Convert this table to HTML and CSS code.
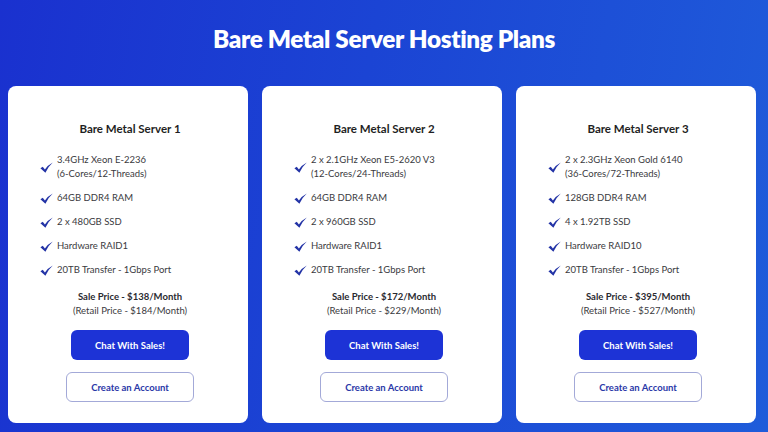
FILE: index.html
```html
<!DOCTYPE html>
<html>
<head>
<meta charset="utf-8">
<link rel="stylesheet" href="styles.css">
</head>
<body>
<div class="page">
  <h1 class="heading">Bare Metal Server Hosting Plans</h1>
  <div class="plans">
    <div class="card">
      <h2 class="card-title">Bare Metal Server 1</h2>
      <ul class="features">
        <li><svg class="check" viewBox="0 0 13 11"><path d="M0.4 6.2 L2.8 4.8 L4.9 7.6 Q7.8 3.2 12.8 0.6 Q8.6 4.2 5.4 10.8 Z"/></svg><span>3.4GHz Xeon E-2236<br>(6-Cores/12-Threads)</span></li>
        <li><svg class="check" viewBox="0 0 13 11"><path d="M0.4 6.2 L2.8 4.8 L4.9 7.6 Q7.8 3.2 12.8 0.6 Q8.6 4.2 5.4 10.8 Z"/></svg><span>64GB DDR4 RAM</span></li>
        <li><svg class="check" viewBox="0 0 13 11"><path d="M0.4 6.2 L2.8 4.8 L4.9 7.6 Q7.8 3.2 12.8 0.6 Q8.6 4.2 5.4 10.8 Z"/></svg><span>2 x 480GB SSD</span></li>
        <li><svg class="check" viewBox="0 0 13 11"><path d="M0.4 6.2 L2.8 4.8 L4.9 7.6 Q7.8 3.2 12.8 0.6 Q8.6 4.2 5.4 10.8 Z"/></svg><span>Hardware RAID1</span></li>
        <li><svg class="check" viewBox="0 0 13 11"><path d="M0.4 6.2 L2.8 4.8 L4.9 7.6 Q7.8 3.2 12.8 0.6 Q8.6 4.2 5.4 10.8 Z"/></svg><span>20TB Transfer - 1Gbps Port</span></li>
      </ul>
      <p class="sale">Sale Price - $138/Month</p>
      <p class="retail">(Retail Price - $184/Month)</p>
      <a class="btn btn-primary">Chat With Sales!</a>
      <a class="btn btn-outline">Create an Account</a>
    </div>
    <div class="card">
      <h2 class="card-title">Bare Metal Server 2</h2>
      <ul class="features">
        <li><svg class="check" viewBox="0 0 13 11"><path d="M0.4 6.2 L2.8 4.8 L4.9 7.6 Q7.8 3.2 12.8 0.6 Q8.6 4.2 5.4 10.8 Z"/></svg><span>2 x 2.1GHz Xeon E5-2620 V3<br>(12-Cores/24-Threads)</span></li>
        <li><svg class="check" viewBox="0 0 13 11"><path d="M0.4 6.2 L2.8 4.8 L4.9 7.6 Q7.8 3.2 12.8 0.6 Q8.6 4.2 5.4 10.8 Z"/></svg><span>64GB DDR4 RAM</span></li>
        <li><svg class="check" viewBox="0 0 13 11"><path d="M0.4 6.2 L2.8 4.8 L4.9 7.6 Q7.8 3.2 12.8 0.6 Q8.6 4.2 5.4 10.8 Z"/></svg><span>2 x 960GB SSD</span></li>
        <li><svg class="check" viewBox="0 0 13 11"><path d="M0.4 6.2 L2.8 4.8 L4.9 7.6 Q7.8 3.2 12.8 0.6 Q8.6 4.2 5.4 10.8 Z"/></svg><span>Hardware RAID1</span></li>
        <li><svg class="check" viewBox="0 0 13 11"><path d="M0.4 6.2 L2.8 4.8 L4.9 7.6 Q7.8 3.2 12.8 0.6 Q8.6 4.2 5.4 10.8 Z"/></svg><span>20TB Transfer - 1Gbps Port</span></li>
      </ul>
      <p class="sale">Sale Price - $172/Month</p>
      <p class="retail">(Retail Price - $229/Month)</p>
      <a class="btn btn-primary">Chat With Sales!</a>
      <a class="btn btn-outline">Create an Account</a>
    </div>
    <div class="card">
      <h2 class="card-title">Bare Metal Server 3</h2>
      <ul class="features">
        <li><svg class="check" viewBox="0 0 13 11"><path d="M0.4 6.2 L2.8 4.8 L4.9 7.6 Q7.8 3.2 12.8 0.6 Q8.6 4.2 5.4 10.8 Z"/></svg><span>2 x 2.3GHz Xeon Gold 6140<br>(36-Cores/72-Threads)</span></li>
        <li><svg class="check" viewBox="0 0 13 11"><path d="M0.4 6.2 L2.8 4.8 L4.9 7.6 Q7.8 3.2 12.8 0.6 Q8.6 4.2 5.4 10.8 Z"/></svg><span>128GB DDR4 RAM</span></li>
        <li><svg class="check" viewBox="0 0 13 11"><path d="M0.4 6.2 L2.8 4.8 L4.9 7.6 Q7.8 3.2 12.8 0.6 Q8.6 4.2 5.4 10.8 Z"/></svg><span>4 x 1.92TB SSD</span></li>
        <li><svg class="check" viewBox="0 0 13 11"><path d="M0.4 6.2 L2.8 4.8 L4.9 7.6 Q7.8 3.2 12.8 0.6 Q8.6 4.2 5.4 10.8 Z"/></svg><span>Hardware RAID10</span></li>
        <li><svg class="check" viewBox="0 0 13 11"><path d="M0.4 6.2 L2.8 4.8 L4.9 7.6 Q7.8 3.2 12.8 0.6 Q8.6 4.2 5.4 10.8 Z"/></svg><span>20TB Transfer - 1Gbps Port</span></li>
      </ul>
      <p class="sale">Sale Price - $395/Month</p>
      <p class="retail">(Retail Price - $527/Month)</p>
      <a class="btn btn-primary">Chat With Sales!</a>
      <a class="btn btn-outline">Create an Account</a>
    </div>
  </div>
</div>
</body>
</html>
```

FILE: styles.css
```css
* { box-sizing: border-box; }
html, body {
  margin: 0;
  padding: 0;
  width: 768px;
  height: 432px;
  overflow: hidden;
}
body {
  font-family: Lato, "Open Sans", sans-serif;
  background: linear-gradient(100deg, #1a31cf 0%, #1b44d4 45%, #1f5cda 100%);
}
.page {
  height: 432px;
  display: flex;
  flex-direction: column;
}
.heading {
  margin: 0;
  height: 86px;
  padding-top: 23px;
  text-align: center;
  color: #fff;
  font-size: 24.3px;
  font-weight: 800;
  line-height: 32px;
  letter-spacing: -0.35px;
}
.plans {
  display: flex;
  gap: 14px;
  padding-left: 8px;
}
.card {
  width: 240px;
  height: 337px;
  background: #fff;
  border-radius: 8px;
  padding: 35px 0 0 4px;
  display: flex;
  flex-direction: column;
  align-items: center;
}
.card-title {
  margin: 0;
  font-size: 11.5px;
  font-weight: 700;
  line-height: 16px;
  color: #1f1f24;
}
.features {
  list-style: none;
  margin: 16px 0 0;
  padding: 0 0 0 28px;
  align-self: stretch;
  display: flex;
  flex-direction: column;
  gap: 10px;
}
.features li {
  display: flex;
  align-items: center;
  font-size: 9.5px;
  line-height: 14px;
  color: #3a3a40;
}
.check {
  width: 13px;
  height: 11px;
  margin-right: 4px;
  flex: none;
  fill: #2333a6;
}
.sale {
  margin: 13px 0 0;
  font-size: 9.5px;
  font-weight: 700;
  line-height: 14px;
  color: #2a2a30;
}
.retail {
  margin: 0;
  font-size: 9.5px;
  line-height: 14px;
  color: #3a3a40;
}
.btn {
  display: flex;
  align-items: center;
  justify-content: center;
  height: 30px;
  border-radius: 6px;
  font-size: 9.5px;
  font-weight: 700;
}
.btn-primary {
  margin-top: 12px;
  width: 118px;
  background: #1d33d6;
  color: #fff;
}
.btn-outline {
  margin-top: 12px;
  width: 128px;
  border: 1px solid #a3a9d8;
  color: #2a38a8;
  background: #fff;
}
```
